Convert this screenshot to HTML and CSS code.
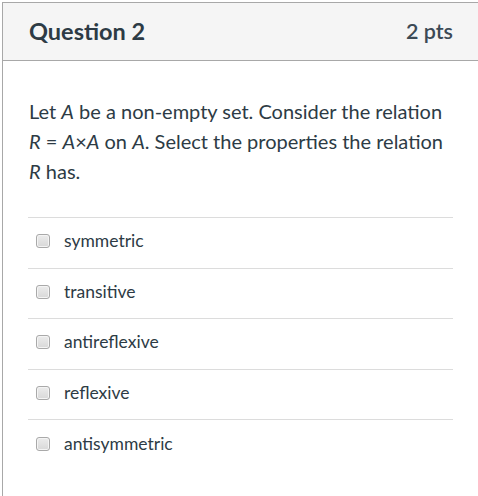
FILE: index.html
```html
<!DOCTYPE html>
<html>
<head>
<meta charset="utf-8">
<link rel="stylesheet" href="styles.css">
</head>
<body>
<div class="card">
  <div class="header">
    <span class="title">Question 2</span>
    <span class="pts">2 pts</span>
  </div>
  <div class="content">
    <p class="question">Let <i>A</i> be a non-empty set. Consider the relation <i>R</i> = <i>A</i>×<i>A</i> on <i>A</i>. Select the properties the relation <i>R</i> has.</p>
    <div class="answers">
      <label class="answer"><span class="box"></span><span class="label">symmetric</span></label>
      <label class="answer"><span class="box"></span><span class="label">transitive</span></label>
      <label class="answer"><span class="box"></span><span class="label">antireflexive</span></label>
      <label class="answer"><span class="box"></span><span class="label">reflexive</span></label>
      <label class="answer"><span class="box"></span><span class="label">antisymmetric</span></label>
    </div>
  </div>
</div>
</body>
</html>
```
FILE: styles.css
```css
html, body {
  margin: 0;
  padding: 0;
  background: #fff;
  overflow: hidden;
}
body {
  font-family: Lato, "Noto Sans", sans-serif;
  color: #2d3b45;
  width: 478px;
  height: 496px;
}
.card {
  margin: 2px 0 0 2px;
  width: 476px;
  height: 494px;
  border: 1px solid #a8a8a8;
  border-right: none;
  border-bottom: none;
  box-sizing: border-box;
}
.header {
  height: 58px;
  background: #f5f5f5;
  border-bottom: 1px solid #a8a8a8;
  box-sizing: border-box;
  display: flex;
  align-items: center;
  justify-content: space-between;
  padding: 0 25px 0 26px;
}
.title {
  font-size: 23.5px;
  font-weight: bold;
  color: #2d3b45;
  margin-top: -1px;
}
.pts {
  font-size: 21.5px;
  font-weight: 600;
  color: #3c4a55;
  margin-top: -1px;
}
.content {
  padding: 35px 25px 0 25px;
}
.question {
  margin: 0 0 31px 1px;
  font-size: 20px;
  line-height: 30px;
}
.question i {
  font-style: italic;
}
.answers {
  display: flex;
  flex-direction: column;
}
.answer {
  display: flex;
  align-items: center;
  border-top: 1px solid #dcdcdc;
  height: 50.6px;
  padding-bottom: 3px;
  box-sizing: border-box;
  font-size: 17.5px;
}
.box {
  width: 12px;
  height: 12px;
  margin-left: 8px;
  margin-right: 14px;
  border: 1px solid #a9a9a9;
  border-radius: 3px;
  background: linear-gradient(#ececec, #d8d8d8);
  box-shadow: inset 0 0 0 1px #f4f4f4;
}
.label {
  line-height: 20px;
}
```
